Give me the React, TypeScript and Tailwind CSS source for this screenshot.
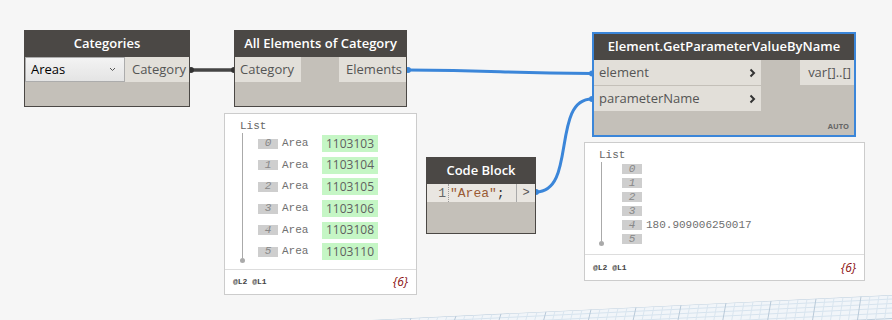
import React from "react";

const Chevron = () => (
  <svg width="7" height="10" viewBox="0 0 7 10" className="shrink-0">
    <polyline points="1.5,1.5 5,5 1.5,8.5" fill="none" stroke="#333" strokeWidth="2" />
  </svg>
);

function Grid() {
  const x0 = 360;
  const x1 = 892;
  const topY = (x: number) => 295 + (892 - x) * 0.048;
  const rows = [0, 4, 8.5, 13, 18, 23.5, 29];
  const cols: number[] = [];
  for (let x = 366; x <= 900; x += 9) cols.push(x);
  return (
    <svg className="absolute left-0 top-0" width="892" height="320" viewBox="0 0 892 320">
      <defs>
        <clipPath id="gclip">
          <polygon points={`${x0},${topY(x0)} ${x1},${topY(x1)} ${x1},320 ${x0},320`} />
        </clipPath>
      </defs>
      <g clipPath="url(#gclip)">
        <rect x="0" y="0" width="892" height="320" fill="#f1f5f9" />
        {rows.map((d, i) => (
          <line
            key={"r" + i}
            x1={x0}
            y1={topY(x0) + d}
            x2={x1}
            y2={topY(x1) + d}
            stroke={i % 5 === 0 ? "#bccdDc" : "#d6e3ee"}
            strokeWidth="1"
          />
        ))}
        {cols.map((x, i) => (
          <line
            key={"c" + i}
            x1={x}
            y1={topY(x)}
            x2={x - 5}
            y2={330}
            stroke={i % 5 === 0 ? "#b8c9d8" : "#d9e5ef"}
            strokeWidth="1"
          />
        ))}
      </g>
    </svg>
  );
}

function Wires() {
  return (
    <svg className="absolute left-0 top-0 pointer-events-none" width="892" height="320" viewBox="0 0 892 320">
      <path d="M190,70 L234,70" stroke="#454545" strokeWidth="3.5" fill="none" />
      <circle cx="191" cy="70" r="3" fill="#333" />
      <circle cx="234" cy="70" r="3" fill="#333" />
      <path d="M407,70 C500,70 500,73.5 592,73.5" stroke="#3b86d9" strokeWidth="3" fill="none" />
      <circle cx="408" cy="70" r="3" fill="#3b86d9" />
      <circle cx="592" cy="73.5" r="3" fill="#3b86d9" />
      <path d="M536,192 C577,192 551,99 592,99" stroke="#3b86d9" strokeWidth="3" fill="none" />
      <circle cx="592" cy="99" r="3" fill="#3b86d9" />
      <circle cx="536" cy="192" r="3" fill="#3b86d9" />
    </svg>
  );
}

function Tree({
  rows,
  lineHeight,
  rowPad,
  rowH,
  listTop,
}: {
  rows: React.ReactNode[];
  lineHeight: string;
  rowPad: string;
  rowH: string;
  listTop: string;
}) {
  return (
    <div className={`flex flex-col ${listTop}`}>
      <div className={`${lineHeight} flex items-center text-[11px] text-[#666] leading-none`}>List</div>
      <div className="flex">
        <div className="w-[5px] flex flex-col items-center">
          <div className="w-px flex-1 bg-[#aaaaaa]" />
          <div className="w-[5px] h-[5px] rounded-full bg-[#aaaaaa]" />
        </div>
        <div className={`flex flex-col ${rowPad}`}>
          {rows.map((r, i) => (
            <div key={i} className={`${rowH} flex items-center`}>
              <div className="w-[20px] h-[10px] bg-[#cecece] text-[#888888] italic text-[11px] leading-none flex items-center justify-center">
                {i}
              </div>
              {r}
            </div>
          ))}
        </div>
      </div>
    </div>
  );
}

export default function App() {
  const ids = ["1103103", "1103104", "1103105", "1103106", "1103108", "1103110"];
  return (
    <div className="relative w-[892px] h-[320px] overflow-hidden bg-[#f6f6f6] font-['Open_Sans',sans-serif]">
      <Grid />
      <Wires />

      {/* Categories */}
      <div className="absolute left-[24px] top-[30px] w-[166px] h-[77px] flex flex-col border border-[#4b4845] bg-[#c4c0b9]">
        <div className="h-[26px] bg-[#4b4845] text-white font-semibold text-[13px] flex items-center justify-center">
          Categories
        </div>
        <div className="h-[25px] flex">
          <div className="w-[100px] flex items-center justify-between pl-[5px] pr-[8px] border border-[#acacac] bg-gradient-to-b from-[#f3f3f3] to-[#e4e4e4] text-[13px] text-black">
            <span>Areas</span>
            <svg width="7" height="5" viewBox="0 0 7 5">
              <polyline points="1,1 3.5,3.5 6,1" fill="none" stroke="#555" strokeWidth="1" />
            </svg>
          </div>
          <div className="flex-1 bg-[#e2dfd9] flex items-center justify-end pr-[3px] text-[13px] text-[#555]">
            Category
          </div>
        </div>
      </div>

      {/* All Elements of Category */}
      <div className="absolute left-[234px] top-[30px] w-[173px] h-[77px] flex flex-col border border-[#4b4845] bg-[#c4c0b9]">
        <div className="h-[26px] bg-[#4b4845] text-white font-semibold text-[13px] flex items-center justify-center">
          All Elements of Category
        </div>
        <div className="h-[25px] flex justify-between">
          <div className="w-[66px] bg-[#e2dfd9] flex items-center pl-[5px] text-[13px] text-[#555]">Category</div>
          <div className="w-[67px] bg-[#e2dfd9] flex items-center justify-end pr-[4px] text-[13px] text-[#555]">
            Elements
          </div>
        </div>
      </div>

      {/* Element.GetParameterValueByName */}
      <div className="absolute left-[592px] top-[32px] w-[264px] h-[105px] flex flex-col border-2 border-[#3b86d9] bg-[#c4c0b9]">
        <div className="h-[26px] bg-[#4b4845] text-white font-semibold text-[13px] flex items-center justify-center">
          Element.GetParameterValueByName
        </div>
        <div className="flex justify-between">
          <div className="flex flex-col gap-px w-[167px]">
            <div className="h-[25px] bg-[#e2dfd9] flex items-center justify-between pl-[5px] pr-[5px] text-[13px] text-[#555]">
              <span>element</span>
              <Chevron />
            </div>
            <div className="h-[25px] bg-[#e2dfd9] flex items-center justify-between pl-[5px] pr-[5px] text-[13px] text-[#555]">
              <span>parameterName</span>
              <Chevron />
            </div>
          </div>
          <div className="w-[54px] h-[25px] bg-[#e2dfd9] flex items-center justify-end pr-[3px] text-[13px] text-[#555]">
            var[]..[]
          </div>
        </div>
        <div className="flex-1 flex items-end justify-end pr-[5px] pb-[5px]">
          <span className="text-[7.5px] font-bold text-[#666] leading-none">AUTO</span>
        </div>
      </div>

      {/* Code Block */}
      <div className="absolute left-[426px] top-[157px] w-[110px] h-[77px] flex flex-col border border-[#4b4845] bg-[#c4c0b9]">
        <div className="h-[26px] bg-[#4b4845] text-white font-semibold text-[13px] flex items-center justify-center">
          Code Block
        </div>
        <div className="h-[18px] flex bg-[#e9e6e1]">
          <div className="w-[22px] flex items-center justify-end pr-[2px] border-r border-dotted border-[#999] text-[13px] text-[#666] font-['Liberation_Mono',monospace] leading-none">
            1
          </div>
          <div className="flex-1 flex items-center pl-[1px] text-[13px] font-['Liberation_Mono',monospace] leading-none">
            <span className="text-[#9a5a34]">"Area"</span>
            <span className="text-[#333]">;</span>
          </div>
          <div className="w-[19px] border-l border-[#aaa] flex items-center justify-center text-[12px] text-[#555] font-['Liberation_Mono',monospace]">
            &gt;
          </div>
        </div>
      </div>

      {/* Watch 1 */}
      <div className="absolute left-[224px] top-[113px] w-[193px] h-[182px] bg-white border border-[#cccccc] flex flex-col font-['Liberation_Mono',monospace]">
        <div className="h-[155px] pl-[15px]">
          <Tree
            listTop="pt-[5px]"
            lineHeight="h-[14px]"
            rowPad="pl-[13px]"
            rowH="h-[21.6px]"
            rows={ids.map((id) => (
              <div key={id} className="flex items-center">
                <span className="ml-[4px] w-[40px] text-[11px] text-[#6f6f6f] leading-none">Area</span>
                <span className="w-[56px] h-[17px] bg-[#c5f6c5] flex items-center pl-[4px] text-[12px] text-[#606060] font-['Open_Sans',sans-serif] leading-none">
                  {id}
                </span>
              </div>
            ))}
          />
        </div>
        <div className="flex-1 border-t border-[#dddddd] flex items-center justify-between pl-[8px] pr-[8px]">
          <span className="text-[8px] font-bold text-[#444]">@L2 @L1</span>
          <span className="text-[12px] italic text-[#8b1010] font-['Open_Sans',sans-serif]">{"{6}"}</span>
        </div>
      </div>

      {/* Watch 2 */}
      <div className="absolute left-[584px] top-[142px] w-[281px] h-[139px] bg-white border border-[#cccccc] flex flex-col font-['Liberation_Mono',monospace]">
        <div className="h-[111px] pl-[14px]">
          <Tree
            listTop="pt-[5px]"
            lineHeight="h-[14px]"
            rowPad="pl-[18px]"
            rowH="h-[14px]"
            rows={[0, 1, 2, 3, 4, 5].map((i) => (
              <span key={i} className="ml-[4px] text-[11px] text-[#6f6f6f] leading-none">
                {i === 4 ? "180.909006250017" : ""}
              </span>
            ))}
          />
        </div>
        <div className="flex-1 border-t border-[#dddddd] flex items-center justify-between pl-[8px] pr-[8px]">
          <span className="text-[8px] font-bold text-[#444]">@L2 @L1</span>
          <span className="text-[12px] italic text-[#8b1010] font-['Open_Sans',sans-serif]">{"{6}"}</span>
        </div>
      </div>
    </div>
  );
}
